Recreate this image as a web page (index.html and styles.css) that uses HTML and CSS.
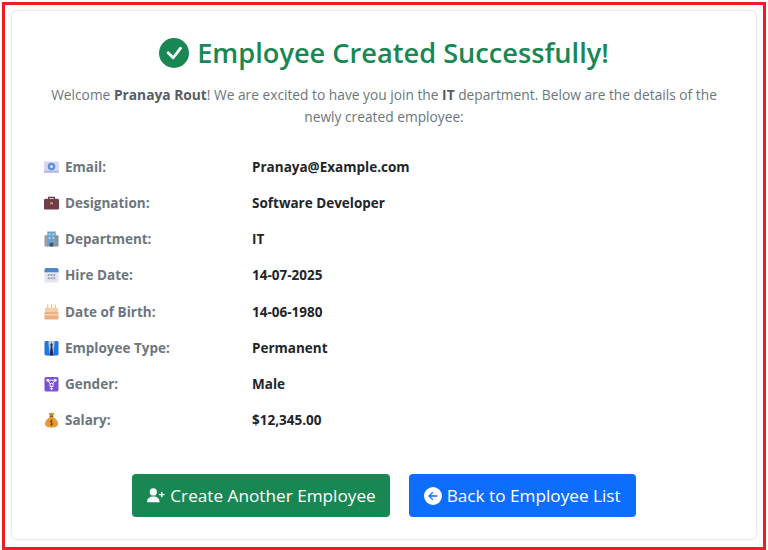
FILE: index.html
```html
<!DOCTYPE html>
<html lang="en">
<head>
<meta charset="utf-8">
<title>Employee Created</title>
<link rel="stylesheet" href="styles.css">
</head>
<body>
<div class="frame">
  <main class="card">
    <h1 class="title">
      <svg class="title-icon" viewBox="0 0 16 16"><path fill="#198754" d="M16 8A8 8 0 1 1 0 8a8 8 0 0 1 16 0zm-3.970-3.030a.75.75 0 0 0-1.080.02L7.480 9.420 5.380 7.300a.75.75 0 0 0-1.060 1.060L6.970 11.030a.75.75 0 0 0 1.080-.02l3.990-4.990a.75.75 0 0 0-.01-1.050z"/></svg>
      <span>Employee Created Successfully!</span>
    </h1>
    <p class="lead">Welcome <strong>Pranaya Rout</strong>! We are excited to have you join the <strong>IT</strong> department. Below are the details of the newly created employee:</p>
    <dl class="details">
      <div class="row">
        <dt><svg class="emoji" viewBox="0 0 16 16"><rect y="2" width="16" height="12" rx="1" fill="#d9d6f2"/><path d="M0 12h16v2H0z" fill="#b7b2ea"/><circle cx="8" cy="7.500" r="4" fill="#5b8fd6"/><circle cx="8" cy="7.500" r="1.600" fill="#dbe7f7"/></svg>Email:</dt>
        <dd>Pranaya@Example.com</dd>
      </div>
      <div class="row">
        <dt><svg class="emoji" viewBox="0 0 16 16"><path d="M5 4V2h6v2" fill="none" stroke="#5a3a3c" stroke-width="1.300"/><rect y="3.500" width="16" height="11.500" rx="1.500" fill="#6f3e4a"/><rect x="6.500" y="7" width="3" height="2.500" fill="#c9925e"/></svg>Designation:</dt>
        <dd>Software Developer</dd>
      </div>
      <div class="row">
        <dt><svg class="emoji" viewBox="0 0 16 16"><rect x="0.500" y="4" width="4" height="12" fill="#9a9fa5"/><rect x="11.500" y="4" width="4" height="12" fill="#8b8f96"/><rect x="3.500" y="0" width="9" height="16" fill="#6fa3c9"/><path d="M5 2h2v2H5zm4 0h2v2H9zM5 6h2v2H5zm4 0h2v2H9z" fill="#b9d6ea"/><rect x="6" y="12" width="4" height="4" fill="#47525c"/></svg>Department:</dt>
        <dd>IT</dd>
      </div>
      <div class="row">
        <dt><svg class="emoji" viewBox="0 0 16 16"><rect x="0.500" y="0.500" width="15" height="15.500" rx="2" fill="#e3e6f0"/><path d="M.5 2.500a2 2 0 0 1 2-2h11a2 2 0 0 1 2 2v2.500H.5z" fill="#4f86c6"/><path d="M4 7h2v2H4zm3 0h2v2H7zm3 0h2v2h-2zM4 10.500h2v2H4zm3 0h2v2H7zm3 0h2v2h-2z" fill="#9aa3b3"/></svg>Hire Date:</dt>
        <dd>14-07-2025</dd>
      </div>
      <div class="row">
        <dt><svg class="emoji" viewBox="0 0 16 16"><path d="M4 0v4m4-4v4m4-4v4" stroke="#e3c178" stroke-width="1.200"/><rect x="1" y="3.500" width="14" height="5" rx="1" fill="#f3cfa8"/><rect x="0.500" y="8" width="15" height="8" rx="1" fill="#eeb083"/><path d="M.5 11h15" stroke="#f9dfc4" stroke-width="1.200"/></svg>Date of Birth:</dt>
        <dd>14-06-1980</dd>
      </div>
      <div class="row">
        <dt><svg class="emoji" viewBox="0 0 16 16"><rect x="0.500" y="0.500" width="15" height="15.500" rx="1.500" fill="#1f78e0"/><path d="M4.500.5h7L10 16H6z" fill="#b9c6d8"/><path d="M8 2.500l1.300 2-.6 1.500 1.500 10H5.800l1.500-10-.6-1.500z" fill="#232a66"/></svg>Employee Type:</dt>
        <dd>Permanent</dd>
      </div>
      <div class="row">
        <dt><svg class="emoji" viewBox="0 0 16 16"><rect x="0.500" y="0.500" width="15" height="15.500" rx="2" fill="#7a52d1"/><circle cx="4" cy="4" r="1.500" fill="#eee8fb"/><circle cx="12" cy="4" r="1.500" fill="#eee8fb"/><circle cx="8" cy="9" r="1.800" fill="none" stroke="#eee8fb" stroke-width="1.200"/><path d="M4 4h8M4 4l3 4m5-4L9 8M8 11v3.500M6.200 13h3.600" stroke="#eee8fb" stroke-width="1.100" fill="none"/></svg>Gender:</dt>
        <dd>Male</dd>
      </div>
      <div class="row">
        <dt><svg class="emoji" viewBox="0 0 16 16"><path d="M5 .5h6L9.500 4h-3z" fill="#c98a2e"/><path d="M6.500 4.500h3C13 7 15 9.500 15 12c0 2.500-2.500 4-7 4s-7-1.500-7-4c0-2.500 2-5 5.500-7.500z" fill="#e59a33"/><rect x="6" y="3.500" width="4" height="1.200" fill="#7d4f1a"/><path d="M8 7.500v7M9.500 9c-.5-.7-3-.8-3 .7s3 1 3 2.400-2.500 1.300-3 .5" stroke="#6b3d12" stroke-width=".8" fill="none"/></svg>Salary:</dt>
        <dd>$12,345.00</dd>
      </div>
    </dl>
    <div class="actions">
      <a class="btn btn-green" href="#">
        <svg class="btn-icon" viewBox="0 0 20 16"><circle cx="7" cy="4" r="4" fill="#fff"/><path d="M0 15.500C0 11 3 9 7 9s7 2 7 6.500z" fill="#fff"/><path d="M16.500 4v6M13.500 7h6" stroke="#fff" stroke-width="1.500"/></svg>
        <span>Create Another Employee</span>
      </a>
      <a class="btn btn-blue" href="#">
        <svg class="btn-icon-round" viewBox="0 0 16 16"><circle cx="8" cy="8" r="8" fill="#fff"/><path d="M11.500 8h-7M7.500 5l-3 3 3 3" stroke="#0d6efd" stroke-width="1.200" fill="none" stroke-linecap="round" stroke-linejoin="round"/></svg>
        <span>Back to Employee List</span>
      </a>
    </div>
  </main>
</div>
</body>
</html>
```

FILE: styles.css
```css
* { box-sizing: border-box; }
html, body { margin: 0; height: 100%; overflow: hidden; }
body {
  background: #fff;
  font-family: "Open Sans", "Noto Sans", "Liberation Sans", sans-serif;
  color: #212529;
}
.frame {
  width: 764px;
  height: 548px;
  margin: 2px 0 0 2px;
  border: 3px solid #ee1c25;
  padding: 6px 7px 8px 7px;
}
.card {
  height: 100%;
  background: #fff;
  border-radius: 5px;
  box-shadow: 0 0 3px rgba(0,0,0,.22);
  padding: 25px 32px 0;
}
.title {
  margin: 0;
  display: flex;
  justify-content: center;
  align-items: center;
  gap: 8px;
  font-size: 27.200px;
  font-weight: 600;
  line-height: 34px;
  color: #198754;
}
.title-icon { width: 30px; height: 30px; margin-top: -1px; }
.lead {
  margin: 14px 0 0;
  text-align: center;
  font-size: 13.750px;
  line-height: 22px;
  color: #6c757d;
}
.lead strong { font-weight: 700; color: #555d65; }
.details { margin: 21px 0 0; }
.row {
  display: flex;
  height: 36.150px;
  align-items: center;
}
.row dt {
  width: 208px;
  display: flex;
  align-items: center;
  gap: 6px;
  font-size: 13.500px;
  font-weight: 700;
  color: #6c757d;
}
.row dd {
  margin: 0;
  font-size: 13.500px;
  font-weight: 700;
  color: #212529;
}
.emoji { width: 15px; height: 16px; flex: none; }
.actions {
  display: flex;
  justify-content: center;
  gap: 19px;
  margin-top: 36px;
}
.btn {
  display: flex;
  align-items: center;
  gap: 5px;
  height: 43px;
  padding: 0 14px 0 15px;
  border-radius: 4px;
  font-size: 17.200px;
  color: #fff;
  text-decoration: none;
}
.btn-green { background: #198754; }
.btn-blue { background: #0d6efd; padding-right: 15px; }
.btn-icon { width: 18px; height: 15px; }
.btn-icon-round { width: 18px; height: 18px; }
```
